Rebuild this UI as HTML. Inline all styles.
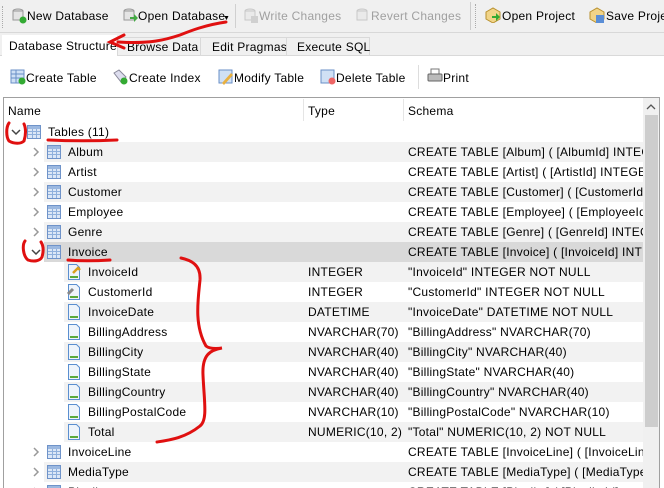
<!DOCTYPE html>
<html style="width:664px;height:488px;overflow:hidden"><head><meta charset="utf-8"><style>
*{margin:0;padding:0;box-sizing:border-box}
body{width:664px;height:488px;overflow:hidden;background:#f0f0f0;font-family:"Liberation Sans",sans-serif;font-size:12px;letter-spacing:.25px;color:#000;position:relative}
.a{position:absolute;white-space:nowrap}
.dis{color:#a0a0a0}
.row{position:absolute;left:5px;width:638px;height:20px;line-height:20px;white-space:nowrap}
.bg{position:absolute;top:0;bottom:0;right:0}
.t{position:absolute;top:0;white-space:nowrap}
.ic{position:absolute;top:3px;width:14px;height:14px}
</style></head><body>
<div class="a" style="left:0;top:0;width:664px;height:33px;background:#f0f0f0;border-bottom:1px solid #d8d8d8"></div>
<div class="a" style="left:2px;top:6px;width:1px;height:22px;border-left:1px dotted #aaa"></div>
<svg class="a" style="left:11px;top:8px" width="16" height="16"><ellipse cx="7" cy="3" rx="5" ry="2" fill="#ddd" stroke="#999"/><rect x="2" y="3" width="10" height="9" fill="#e4e4e4" stroke="#999"/><circle cx="12" cy="12" r="3.5" fill="#3a3"/></svg>
<div class="a" style="left:27px;top:9px">New Database</div>
<svg class="a" style="left:122px;top:8px" width="16" height="16"><ellipse cx="7" cy="3" rx="5" ry="2" fill="#ddd" stroke="#999"/><rect x="2" y="3" width="10" height="9" fill="#e4e4e4" stroke="#999"/><path d="M8 9h4v-3l4 4-4 4v-3h-4z" fill="#4a4"/></svg>
<div class="a" style="left:138px;top:9px">Open Database</div>
<div class="a" style="left:223px;top:15px;font-size:7px">▼</div>
<div class="a" style="left:235px;top:4px;width:1px;height:24px;background:#d0d0d0"></div>
<svg class="a" style="left:243px;top:8px" width="16" height="16" opacity=".45"><ellipse cx="7" cy="3" rx="5" ry="2" fill="#ddd" stroke="#999"/><rect x="2" y="3" width="10" height="9" fill="#e4e4e4" stroke="#999"/><rect x="8" y="8" width="7" height="7" fill="#aaa"/></svg>
<div class="a dis" style="left:259px;top:9px">Write Changes</div>
<svg class="a" style="left:355px;top:8px" width="16" height="16" opacity=".45"><ellipse cx="7" cy="3" rx="5" ry="2" fill="#ddd" stroke="#999"/><rect x="2" y="3" width="10" height="9" fill="#e4e4e4" stroke="#999"/></svg>
<div class="a dis" style="left:371px;top:9px">Revert Changes</div>
<div class="a" style="left:470px;top:2px;width:1px;height:28px;background:#ccc"></div>
<div class="a" style="left:475px;top:4px;width:1px;height:24px;border-left:1px dotted #aaa"></div>
<svg class="a" style="left:485px;top:7px" width="16" height="16"><path d="M1 5l7-4 7 4v7l-7 4-7-4z" fill="#f1d488" stroke="#b8902e"/><path d="M7 9h4v-3l4 4-4 4v-3h-4z" fill="#3a3"/></svg>
<div class="a" style="left:502px;top:9px">Open Project</div>
<svg class="a" style="left:589px;top:7px" width="16" height="16"><path d="M1 5l7-4 7 4v7l-7 4-7-4z" fill="#f1d488" stroke="#b8902e"/><rect x="7" y="8" width="8" height="8" fill="#5a8ed6"/></svg>
<div class="a" style="left:606px;top:9px">Save Project</div>
<div class="a" style="left:0;top:55px;width:664px;height:1px;background:#d9d9d9"></div>
<div class="a" style="left:2px;top:35px;width:115px;height:22px;background:#fff"></div>
<div class="a" style="left:9px;top:39px">Database Structure</div>
<div class="a" style="left:117px;top:37px;width:84px;height:19px;border:1px solid #d9d9d9;border-bottom:none"></div>
<div class="a" style="left:127px;top:40px">Browse Data</div>
<div class="a" style="left:200px;top:37px;width:87px;height:19px;border:1px solid #d9d9d9;border-bottom:none"></div>
<div class="a" style="left:212px;top:40px">Edit Pragmas</div>
<div class="a" style="left:286px;top:37px;width:84px;height:19px;border:1px solid #d9d9d9;border-bottom:none"></div>
<div class="a" style="left:297px;top:40px">Execute SQL</div>
<div class="a" style="left:0;top:56px;width:664px;height:432px;background:#fff"></div>
<svg class="a" style="left:10px;top:69px" width="16" height="16"><rect x="1" y="1" width="13" height="13" fill="#cfe0f5" stroke="#6a8fc7"/><path d="M1 5h13M1 9h13M6 1v13" stroke="#6a8fc7"/><circle cx="12" cy="12" r="3.5" fill="#3a3"/></svg>
<div class="a" style="left:26px;top:71px">Create Table</div>
<svg class="a" style="left:112px;top:69px" width="16" height="16"><path d="M2 4l5-3 7 7-5 5z" fill="#dde" stroke="#889"/><circle cx="12" cy="12" r="3.5" fill="#3a3"/></svg>
<div class="a" style="left:129px;top:71px">Create Index</div>
<svg class="a" style="left:218px;top:69px" width="16" height="16"><rect x="1" y="1" width="13" height="13" fill="#cfe0f5" stroke="#6a8fc7"/><path d="M4 14l9-10 2 2-9 10z" fill="#e8b040"/></svg>
<div class="a" style="left:234px;top:71px">Modify Table</div>
<svg class="a" style="left:320px;top:69px" width="16" height="16"><rect x="1" y="1" width="13" height="13" fill="#cfe0f5" stroke="#6a8fc7"/><circle cx="12" cy="12" r="3.5" fill="#e66"/></svg>
<div class="a" style="left:336px;top:71px">Delete Table</div>
<div class="a" style="left:418px;top:65px;width:1px;height:24px;background:#ddd"></div>
<svg class="a" style="left:427px;top:68px" width="16" height="16"><rect x="4" y="1" width="8" height="6" fill="#fff" stroke="#777"/><rect x="1" y="6" width="14" height="7" rx="1" fill="#bbb" stroke="#666"/></svg>
<div class="a" style="left:443px;top:71px">Print</div>
<div class="a" style="left:3px;top:97px;width:657px;height:391px;border:1px solid #a0a0a0;border-bottom:none"></div>
<div class="a" style="left:8px;top:104px">Name</div>
<div class="a" style="left:303px;top:99px;width:1px;height:22px;background:#e5e5e5"></div>
<div class="a" style="left:308px;top:104px">Type</div>
<div class="a" style="left:403px;top:99px;width:1px;height:22px;background:#e5e5e5"></div>
<div class="a" style="left:408px;top:104px">Schema</div>
<div id="rows"></div>
<div class="a" style="left:643px;top:98px;width:16px;height:390px;background:#f0f0f0"></div>
<div class="a" style="left:645px;top:115px;width:13px;height:312px;background:#cdcdcd"></div>
<svg class="a" style="left:646px;top:103px" width="10" height="8"><path d="M1 6l4-4 4 4" stroke="#555" stroke-width="1.3" fill="none"/></svg>
<script>
const T=[["Tables (11)",0,"",""],["Album",1,"","CREATE TABLE [Album] ( [AlbumId] INTEGER"],["Artist",1,"","CREATE TABLE [Artist] ( [ArtistId] INTEGER"],["Customer",1,"","CREATE TABLE [Customer] ( [CustomerId]"],["Employee",1,"","CREATE TABLE [Employee] ( [EmployeeId]"],["Genre",1,"","CREATE TABLE [Genre] ( [GenreId] INTEGER"],["Invoice",1,"","CREATE TABLE [Invoice] ( [InvoiceId] INTEGER",1],
["InvoiceId",2,"INTEGER","\"InvoiceId\" INTEGER NOT NULL","k"],["CustomerId",2,"INTEGER","\"CustomerId\" INTEGER NOT NULL","f"],["InvoiceDate",2,"DATETIME","\"InvoiceDate\" DATETIME NOT NULL"],["BillingAddress",2,"NVARCHAR(70)","\"BillingAddress\" NVARCHAR(70)"],["BillingCity",2,"NVARCHAR(40)","\"BillingCity\" NVARCHAR(40)"],["BillingState",2,"NVARCHAR(40)","\"BillingState\" NVARCHAR(40)"],["BillingCountry",2,"NVARCHAR(40)","\"BillingCountry\" NVARCHAR(40)"],["BillingPostalCode",2,"NVARCHAR(10)","\"BillingPostalCode\" NVARCHAR(10)"],["Total",2,"NUMERIC(10, 2)","\"Total\" NUMERIC(10, 2) NOT NULL"],["InvoiceLine",1,"","CREATE TABLE [InvoiceLine] ( [InvoiceLineId]"],["MediaType",1,"","CREATE TABLE [MediaType] ( [MediaTypeId]"],["Playlist",1,"","CREATE TABLE [Playlist] ( [PlaylistId]"]];
let h="";
const tbl='<svg width="14" height="14"><rect x=".5" y=".5" width="13" height="13" fill="#dbe7f7" stroke="#6f93c9"/><rect x="1" y="1" width="12" height="3" fill="#9bb8e0"/><path d="M1 6.5h12M1 9.5h12M5.5 4v9M9.5 4v9" stroke="#8fb0dc"/></svg>';
const col=(k)=>'<svg width="14" height="16"><path d="M1.5 .5h8l3 3v12h-11z" fill="#eef4fb" stroke="#5b8fd0"/><rect x="3" y="12" width="8" height="2" fill="#5aaa3a"/>'+(k=="k"?'<path d="M6 9l5-5 2 2" stroke="#d8a020" stroke-width="2.5" fill="none"/>':k=="f"?'<path d="M1 10l5-5" stroke="#888" stroke-width="3"/>':'')+'</svg>';
T.forEach((r,i)=>{const y=122+i*20,lv=r[1];const bx=lv==0?24:lv==1?44:64;
let bg=r[4]===1?"#d9d9d9":(i%2?"#f2f2f2":"transparent");
h+=`<div class="row" style="top:${y}px"><div class="bg" style="left:${bx-5}px;background:${bg}"></div>`;
if(lv<2){const cx=lv==0?5:25;const open=(i==0||i==6);
h+=`<svg class="t" style="left:${cx}px;top:4px" width="12" height="12"><path d="${open?'M2 4l4 4 4-4':'M4 2l4 4-4 4'}" stroke="${open?'#444':'#999'}" stroke-width="1.5" fill="none"/></svg>`;}
const ix=lv==0?22:lv==1?42:62;
h+=`<div class="ic" style="left:${ix}px;top:${lv==2?2:3}px">${lv<2?tbl:col(r[4])}</div>`;
h+=`<div class="t" style="left:${ix+21}px">${r[0]}</div>`;
if(r[2])h+=`<div class="t" style="left:303px">${r[2]}</div>`;
if(r[3])h+=`<div class="t" style="left:403px;width:236px;overflow:hidden">${r[3]}</div>`;
h+="</div>";});
document.getElementById("rows").innerHTML=h;
</script>
<svg class="a" style="left:0;top:0" width="664" height="488" fill="none" stroke="#e01010" stroke-width="3" stroke-linecap="round">
<path d="M226 22C205 25 190 31 180 35C165 40 150 44 118 42"/>
<path d="M124 35L110 42L124 48"/>
<path d="M9 123C6 127 6 137 9 141C14 144 21 144 24 141C26 135 26 128 24 124"/>
<path d="M48 140C70 141 95 141 117 140"/>
<path d="M25 241C22 245 23 256 28 260C34 262 40 261 42 257C44 250 43 245 41 242"/>
<path d="M68 260C80 261 95 261 110 260"/>
<path d="M181 258C190 260 201 264 200 280C198 300 194 325 206 346C211 350 222 348 222 348C210 350 202 355 203 375C204 400 208 420 200 426C185 438 170 440 157 442"/>
</svg>
</body></html>
